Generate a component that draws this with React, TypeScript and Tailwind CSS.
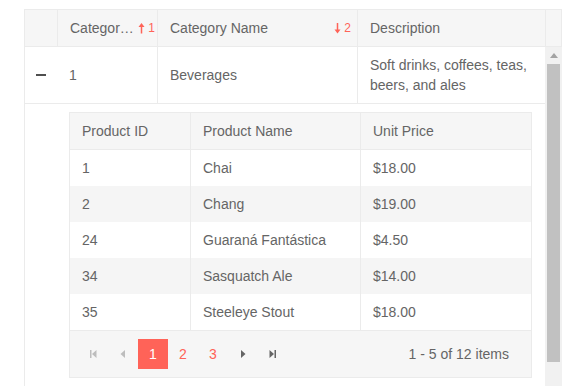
import React from "react";

const SortUp = () => (
  <svg width="7" height="11" viewBox="0 0 7 11" className="shrink-0">
    <path d="M3.5 0 L6.5 4 L4.25 4 L4.25 10.5 L2.75 10.5 L2.75 4 L0.5 4 Z" fill="#ff6358" />
  </svg>
);
const SortDown = () => (
  <svg width="7" height="11" viewBox="0 0 7 11" className="shrink-0">
    <path d="M3.5 10.5 L6.5 6.5 L4.25 6.5 L4.25 0 L2.75 0 L2.75 6.5 L0.5 6.5 Z" fill="#ff6358" />
  </svg>
);

const PagerIcon = ({ kind, color }: { kind: "first" | "prev" | "next" | "last"; color: string }) => {
  let d = "";
  if (kind === "first") d = "M1 0 H2.5 V8 H1 Z M7.5 0 L3 4 L7.5 8 Z";
  if (kind === "prev") d = "M6 0 L1.5 4 L6 8 Z";
  if (kind === "next") d = "M2 0 L6.5 4 L2 8 Z";
  if (kind === "last") d = "M0.5 0 L5 4 L0.5 8 Z M5.5 0 H7 V8 H5.5 Z";
  return (
    <svg width="8" height="8" viewBox="0 0 8 8">
      <path d={d} fill={color} />
    </svg>
  );
};

const products = [
  { id: "1", name: "Chai", price: "$18.00" },
  { id: "2", name: "Chang", price: "$19.00" },
  { id: "24", name: "Guaraná Fantástica", price: "$4.50" },
  { id: "34", name: "Sasquatch Ale", price: "$14.00" },
  { id: "35", name: "Steeleye Stout", price: "$18.00" },
];

export default function App() {
  return (
    <div className="h-[386px] overflow-hidden bg-white pl-[24px] pt-[9px]">
      <div
        className="w-[538px] border border-[#ebebeb] text-[14px] leading-[20px] text-[#656565]"
        style={{ fontFamily: '"Liberation Sans", Arial, sans-serif' }}
      >
        {/* Header */}
        <div className="flex h-[37px] border-b border-[#ebebeb] bg-[#f6f6f6]">
          <div className="w-[32px] shrink-0" />
          <div className="flex w-[100px] shrink-0 items-center border-l border-[#ebebeb] pl-[12px] pr-[2px]">
            <span className="min-w-0 flex-1 truncate">Category ID</span>
            <span className="ml-[1px] flex items-center gap-[3px]">
              <SortUp />
              <span className="text-[12px] text-[#ff6358]">1</span>
            </span>
          </div>
          <div className="flex w-[200px] shrink-0 items-center border-l border-[#ebebeb] pl-[12px] pr-[6px]">
            <span className="min-w-0 flex-1 truncate">Category Name</span>
            <span className="ml-[4px] flex items-center gap-[3px]">
              <SortDown />
              <span className="text-[12px] text-[#ff6358]">2</span>
            </span>
          </div>
          <div className="flex w-[188px] shrink-0 items-center border-l border-[#ebebeb] pl-[12px]">
            Description
          </div>
          <div className="w-[17px] shrink-0 border-l border-[#ebebeb]" />
        </div>

        {/* Body */}
        <div className="flex">
          <div className="w-[520px] shrink-0">
            {/* master row */}
            <div className="flex border-b border-[#ebebeb]">
              <div className="flex w-[32px] shrink-0 items-center justify-center">
                <div className="h-[2px] w-[10px] bg-[#4f4f4f]" />
              </div>
              <div className="flex w-[100px] shrink-0 items-center px-[12px]">1</div>
              <div className="flex w-[200px] shrink-0 items-center border-l border-[#ebebeb] px-[12px]">
                Beverages
              </div>
              <div className="w-[188px] shrink-0 border-l border-[#ebebeb] px-[12px] py-[8px]">
                Soft drinks, coffees, teas, beers, and ales
              </div>
            </div>

            {/* detail row */}
            <div className="flex border-b border-[#ebebeb]">
              <div className="w-[32px] shrink-0" />
              <div className="w-[488px] shrink-0 px-[12px] py-[8px]">
                <div className="w-[463px] border border-[#ebebeb]">
                  <div className="flex h-[37px] border-b border-[#ebebeb] bg-[#f6f6f6]">
                    <div className="flex w-[120px] shrink-0 items-center px-[12px]">Product ID</div>
                    <div className="flex w-[170px] shrink-0 items-center border-l border-[#ebebeb] px-[12px]">
                      Product Name
                    </div>
                    <div className="flex w-[171px] shrink-0 items-center border-l border-[#ebebeb] px-[12px]">
                      Unit Price
                    </div>
                  </div>
                  {products.map((p, i) => (
                    <div key={p.id} className={"flex h-[36px] " + (i % 2 === 1 ? "bg-[#f5f5f5]" : "bg-white")}>
                      <div className="flex w-[120px] shrink-0 items-center px-[12px]">{p.id}</div>
                      <div className="flex w-[170px] shrink-0 items-center border-l border-[#ebebeb] px-[12px]">
                        {p.name}
                      </div>
                      <div className="flex w-[171px] shrink-0 items-center border-l border-[#ebebeb] px-[12px]">
                        {p.price}
                      </div>
                    </div>
                  ))}
                  {/* pager */}
                  <div className="flex h-[47px] items-center border-t border-[#ebebeb] bg-[#f6f6f6] px-[8px]">
                    <div className="flex h-[30px] w-[30px] items-center justify-center">
                      <PagerIcon kind="first" color="#bdbdbd" />
                    </div>
                    <div className="flex h-[30px] w-[30px] items-center justify-center">
                      <PagerIcon kind="prev" color="#bdbdbd" />
                    </div>
                    <div className="flex h-[30px] w-[30px] items-center justify-center bg-[#ff6358] text-white">1</div>
                    <div className="flex h-[30px] w-[30px] items-center justify-center text-[#ff6358]">2</div>
                    <div className="flex h-[30px] w-[30px] items-center justify-center text-[#ff6358]">3</div>
                    <div className="flex h-[30px] w-[30px] items-center justify-center">
                      <PagerIcon kind="next" color="#656565" />
                    </div>
                    <div className="flex h-[30px] w-[30px] items-center justify-center">
                      <PagerIcon kind="last" color="#656565" />
                    </div>
                    <div className="flex-1" />
                    <div className="mr-[14px]">1 - 5 of 12 items</div>
                  </div>
                </div>
              </div>
            </div>

            {/* next master row (cut off) */}
            <div className="flex h-[57px]">
              <div className="w-[32px] shrink-0" />
              <div className="w-[100px] shrink-0" />
              <div className="w-[200px] shrink-0 border-l border-[#ebebeb]" />
              <div className="w-[188px] shrink-0 border-l border-[#ebebeb]" />
            </div>
          </div>

          {/* scrollbar */}
          <div className="flex w-[17px] shrink-0 flex-col bg-[#f1f1f1]">
            <div className="flex h-[17px] shrink-0 items-center justify-center">
              <svg width="8" height="5" viewBox="0 0 8 5">
                <path d="M4 0 L8 5 L0 5 Z" fill="#a3a3a3" />
              </svg>
            </div>
            <div className="mx-[2px] h-[298px] bg-[#c1c1c1]" />
          </div>
        </div>
      </div>
    </div>
  );
}
